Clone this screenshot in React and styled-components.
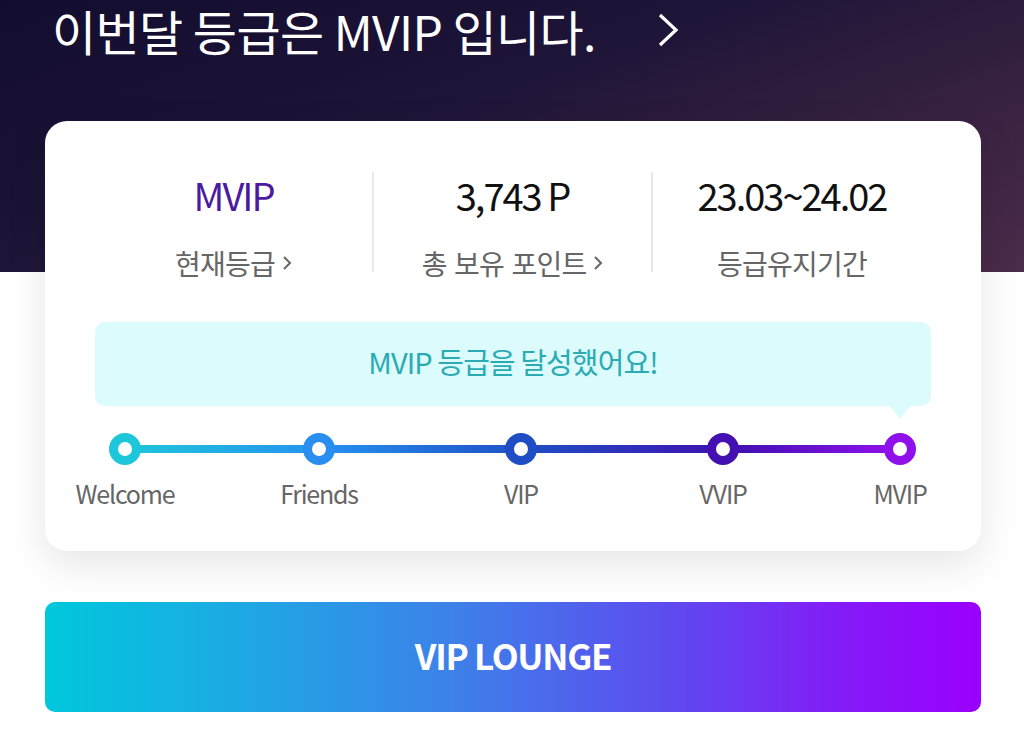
import React from "react";
import styled, { createGlobalStyle } from "styled-components";

const Global = createGlobalStyle`
  html, body { margin: 0; padding: 0; background: #ffffff; }
  body { font-family: "Noto Sans CJK KR", "Noto Sans", sans-serif; }
  * { box-sizing: border-box; }
`;

const Page = styled.div`
  width: 1024px;
  height: 733px;
  overflow: hidden;
  background: #ffffff;
`;

const Header = styled.header`
  height: 272px;
  padding: 0 52px;
  background: linear-gradient(160deg, #120d2e 0%, #1d1437 40%, #3a2342 75%, #4b2b4a 100%);
`;

const TitleRow = styled.div`
  display: flex;
  align-items: center;
  height: 60px;
`;

const Title = styled.h1`
  margin: 0;
  color: #ffffff;
  font-size: 48px;
  font-weight: 400;
  letter-spacing: -0.6px;
  line-height: 60px;
  white-space: nowrap;
`;

const Chevron = styled.svg`
  margin-left: 60px;
  width: 24px;
  height: 40px;
`;

const Card = styled.section`
  width: 936px;
  margin: -151px 0 0 45px;
  position: relative;
  background: #ffffff;
  border-radius: 22px;
  box-shadow: 0 14px 40px rgba(0, 0, 0, 0.1);
  padding: 51px 50px 0;
  height: 430px;
`;

const Stats = styled.div`
  display: grid;
  grid-template-columns: 277px 279px 280px;
  height: 100px;
`;

const Stat = styled.div`
  display: flex;
  flex-direction: column;
  align-items: center;
  justify-content: space-between;
  border-left: ${(p) => (p.$divider ? "2px solid #e8e8e8" : "none")};
  padding: 0;
`;

const Value = styled.div`
  font-size: 38px;
  line-height: 46px;
  letter-spacing: -2px;
  color: ${(p) => p.$color || "#111111"};
`;

const Label = styled.div`
  display: flex;
  align-items: center;
  gap: 7px;
  font-size: 28px;
  line-height: 34px;
  letter-spacing: -0.8px;
  word-spacing: 2px;
  color: #666666;
  margin-bottom: -8px;
`;

const SmallChevron = styled.svg`
  width: 10px;
  height: 20px;
`;

const Banner = styled.div`
  position: relative;
  margin-top: 50px;
  height: 84px;
  padding-bottom: 6px;
  border-radius: 10px;
  background: #dcfbfc;
  display: flex;
  align-items: center;
  justify-content: center;
  color: #2aabb3;
  font-size: 29px;
  letter-spacing: -0.9px;
  &::after {
    content: "";
    position: absolute;
    right: 20px;
    bottom: -13px;
    border-left: 11px solid transparent;
    border-right: 11px solid transparent;
    border-top: 14px solid #dcfbfc;
  }
`;

const Track = styled.div`
  position: relative;
  margin: 27px 0 0 -20px;
  display: grid;
  grid-template-columns: 100px 288px 116px 288px 66px;
  &::before {
    content: "";
    position: absolute;
    left: 50px;
    width: 775px;
    top: 12px;
    height: 8px;
    background: linear-gradient(90deg, #1ec6da 0%, #2690f0 26%, #1f4ec4 52%, #3e10b0 78%, #9210ee 100%);
  }
`;

const Step = styled.div`
  position: relative;
  display: flex;
  flex-direction: column;
  align-items: center;
  gap: 12px;
`;

const Dot = styled.span`
  width: 32px;
  height: 32px;
  border-radius: 50%;
  background: #ffffff;
  border: 9px solid ${(p) => p.$color};
`;

const StepName = styled.span`
  font-size: 25px;
  line-height: 32px;
  letter-spacing: -1.2px;
  color: #666666;
  white-space: nowrap;
`;

const Lounge = styled.button`
  display: flex;
  align-items: center;
  justify-content: center;
  width: 936px;
  height: 110px;
  margin: 51px 0 0 45px;
  padding: 0 0 6px;
  border: none;
  border-radius: 10px;
  background: linear-gradient(90deg, #00c8dc 0%, #1fa7e4 22%, #3f7ee9 45%, #6048f0 68%, #8a14f8 88%, #9a00ff 100%);
  color: #ffffff;
  font-family: "Noto Sans CJK KR", "Noto Sans", sans-serif;
  font-size: 35px;
  font-weight: 700;
  letter-spacing: -1.3px;
`;

const steps = [
  { name: "Welcome", color: "#1ec6da" },
  { name: "Friends", color: "#2a8ef0" },
  { name: "VIP", color: "#1f4ec4" },
  { name: "VVIP", color: "#4410b2" },
  { name: "MVIP", color: "#9010ec" },
];

const Arrow = () => (
  <SmallChevron viewBox="0 0 10 20">
    <path d="M2 4 L8 10 L2 16" fill="none" stroke="#666" strokeWidth="2" />
  </SmallChevron>
);

export default function App() {
  return (
    <Page>
      <Global />
      <Header>
        <TitleRow>
          <Title>이번달 등급은 MVIP 입니다.</Title>
          <Chevron viewBox="0 0 24 40">
            <path d="M4 5 L20 20 L4 35" fill="none" stroke="#ffffff" strokeWidth="3.2" />
          </Chevron>
        </TitleRow>
      </Header>
      <Card>
        <Stats>
          <Stat>
            <Value $color="#4b1aa0">MVIP</Value>
            <Label>현재등급<Arrow /></Label>
          </Stat>
          <Stat $divider>
            <Value>3,743 P</Value>
            <Label>총 보유 포인트<Arrow /></Label>
          </Stat>
          <Stat $divider>
            <Value>23.03~24.02</Value>
            <Label>등급유지기간</Label>
          </Stat>
        </Stats>
        <Banner>MVIP 등급을 달성했어요!</Banner>
        <Track>
          {steps.map((s) => (
            <Step key={s.name}>
              <Dot $color={s.color} />
              <StepName>{s.name}</StepName>
            </Step>
          ))}
        </Track>
      </Card>
      <Lounge>VIP LOUNGE</Lounge>
    </Page>
  );
}
